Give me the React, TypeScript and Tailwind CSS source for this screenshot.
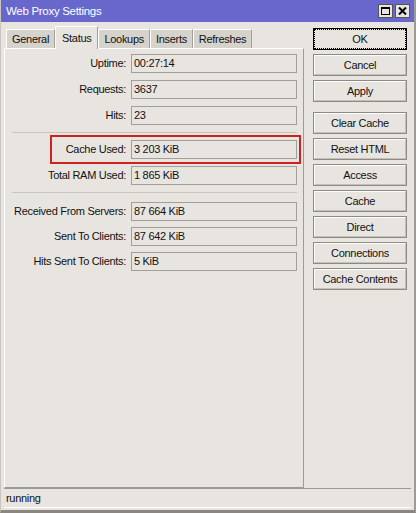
import React from 'react';

const font = { fontFamily: '"Liberation Sans", Arial, sans-serif' };

interface Row {
  label: string;
  value: string;
}

const group1: Row[] = [
  { label: 'Uptime:', value: '00:27:14' },
  { label: 'Requests:', value: '3637' },
  { label: 'Hits:', value: '23' },
];

const group3: Row[] = [
  { label: 'Received From Servers:', value: '87 664 KiB' },
  { label: 'Sent To Clients:', value: '87 642 KiB' },
  { label: 'Hits Sent To Clients:', value: '5 KiB' },
];

const buttons1 = ['OK', 'Cancel', 'Apply'];
const buttons2 = ['Clear Cache', 'Reset HTML', 'Access', 'Cache', 'Direct', 'Connections', 'Cache Contents'];

const tabs = ['General', 'Status', 'Lookups', 'Inserts', 'Refreshes'];

const Field: React.FC<{ row: Row }> = ({ row }) => (
  <div className="flex items-center h-[18px]">
    <div className="w-[121px] text-right pr-[5px] whitespace-nowrap">{row.label}</div>
    <div className="w-[166px] h-[19px] border border-[#a29e98] bg-[#e8e5e0] flex items-center px-[2px]">
      {row.value}
    </div>
  </div>
);

const Separator = () => <div className="ml-[7px] mr-[6px] h-[2px] border-t border-[#c9c5bf] border-b-white" />;

const WinButton: React.FC<{ label: string; focused?: boolean }> = ({ label, focused }) => (
  <div
    className={`h-[22px] w-[94px] flex items-center justify-center bg-[#e8e5e0] ${
      focused ? 'border border-black' : 'border border-[#8d8983]'
    }`}
  >
    <div
      className={`w-full h-full flex items-center justify-center ${
        focused ? 'border border-dotted border-black' : 'border border-white border-r-[#c4c0ba] border-b-[#c4c0ba]'
      }`}
    >
      {label}
    </div>
  </div>
);

export default function App() {
  return (
    <div
      style={font}
      className="w-[416px] h-[513px] bg-[#e8e5e0] text-[11px] tracking-[-0.3px] text-[#111] flex flex-col border-l border-[#c8c4be] border-r-2 border-r-[#9e9a94] border-b-[3px] border-b-[#8a8680] overflow-hidden"
    >
      {/* Title bar */}
      <div className="h-[22px] shrink-0 bg-[#6868cc] flex items-center justify-between pl-[5px] pr-[4px]">
        <span className="text-white text-[11.5px] pt-[1px]">Web Proxy Settings</span>
        <div className="flex gap-[2px]">
          <div className="w-[15px] h-[14px] bg-[#e8e5e0] border border-[#555] flex items-center justify-center">
            <div className="w-[9px] h-[8px] border border-black border-t-2" />
          </div>
          <div className="w-[15px] h-[14px] bg-[#e8e5e0] border border-[#555] flex items-center justify-center">
            <svg width="9" height="8" viewBox="0 0 9 8">
              <path d="M1 0.5 L8 7.5 M8 0.5 L1 7.5" stroke="#000" strokeWidth="2" />
            </svg>
          </div>
        </div>
      </div>

      <div className="flex flex-1 min-h-0">
        {/* Left: tabs + panel */}
        <div className="w-[300px] ml-[3px] flex flex-col">
          <div className="flex items-end h-[24px] pl-[2px] mt-[2px]">
            {tabs.map((t) =>
              t === 'Status' ? (
                <div
                  key={t}
                  className="h-[23px] px-[6px] flex items-start pt-[3px] bg-[#e8e5e0] border-l border-t border-white border-r border-r-[#a29e98] relative -mb-px z-10"
                >
                  {t}
                </div>
              ) : (
                <div
                  key={t}
                  className="h-[19px] px-[5px] flex items-center bg-[#d6d2cc] border-l border-t border-white border-r border-r-[#a29e98]"
                >
                  {t}
                </div>
              ),
            )}
          </div>
          <div className="h-[440px] border-l border-t border-white border-r border-b border-r-[#9e9a94] border-b-[#9e9a94] pt-[5px] flex flex-col">
            <div className="flex flex-col gap-[8px] pl-[5px]">
              {group1.map((r) => (
                <Field key={r.label} row={r} />
              ))}
            </div>
            <div className="mt-[8px] mb-[6px]">
              <Separator />
            </div>
            <div className="flex flex-col gap-[8px] pl-[5px]">
              <div className="relative">
                <Field row={{ label: 'Cache Used:', value: '3 203 KiB' }} />
                <div className="absolute left-[40px] top-[-5px] w-[251px] h-[29px] border-2 border-[#cc2222] pointer-events-none" />
              </div>
              <Field row={{ label: 'Total RAM Used:', value: '1 865 KiB' }} />
            </div>
            <div className="mt-[8px] mb-[8px]">
              <Separator />
            </div>
            <div className="flex flex-col gap-[7px] pl-[5px]">
              {group3.map((r) => (
                <Field key={r.label} row={r} />
              ))}
            </div>
          </div>
        </div>

        {/* Right: buttons */}
        <div className="ml-[9px] pt-[6px] flex flex-col">
          <div className="flex flex-col gap-[4px]">
            {buttons1.map((b) => (
              <WinButton key={b} label={b} focused={b === 'OK'} />
            ))}
          </div>
          <div className="flex flex-col gap-[4px] mt-[10px]">
            {buttons2.map((b) => (
              <WinButton key={b} label={b} />
            ))}
          </div>
        </div>
      </div>

      {/* Status bar */}
      <div className="h-[20px] shrink-0 mx-[3px] mb-[2px] border-t border-[#9e9a94] border-b border-b-white flex items-center pl-[2px]">
        running
      </div>
    </div>
  );
}
